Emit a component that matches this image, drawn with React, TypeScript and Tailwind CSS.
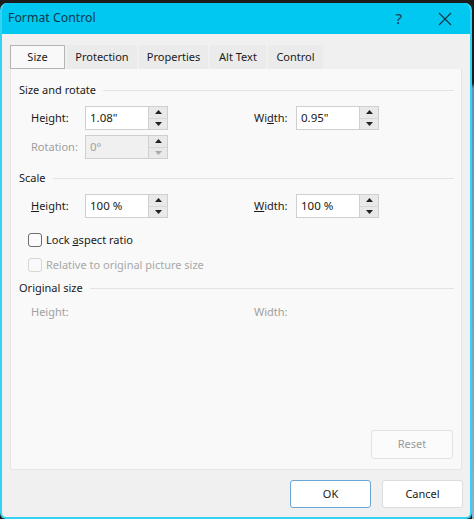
import React from "react";

const Spinner = ({ disabled = false }: { disabled?: boolean }) => (
  <div className="flex flex-col w-[19px] h-full border-l border-[#d0d0d0] bg-[#f3f3f3]">
    <div className="flex-1 flex items-center justify-center border-b border-[#d8d8d8] bg-[#e9e9e9]">
      <svg width="7" height="4" viewBox="0 0 7 4">
        <path d="M0 4 L3.5 0 L7 4 Z" fill="#222" />
      </svg>
    </div>
    <div className="flex-1 flex items-center justify-center bg-[#e9e9e9]">
      <svg width="7" height="4" viewBox="0 0 7 4">
        <path d="M0 0 L3.5 4 L7 0 Z" fill={disabled ? "#aaa" : "#222"} />
      </svg>
    </div>
  </div>
);

const NumberBox = ({ value, disabled = false }: { value: string; disabled?: boolean }) => (
  <div className="flex h-[24px] w-[83px] border border-[#cfcfcf]">
    <div
      className={`flex-1 flex items-center pl-[4px] text-[11.5px] ${
        disabled ? "bg-[#f0f0f0] text-[#a0a0a0]" : "bg-white text-[#1a1a1a]"
      }`}
    >
      {value}
    </div>
    <Spinner disabled={disabled} />
  </div>
);

const Heading = ({ title }: { title: string }) => (
  <div className="flex items-center h-[20px] pl-[8px] pr-[7px] gap-[7px]">
    <span className="text-[11px] text-[#1a1a1a] whitespace-nowrap">{title}</span>
    <div className="flex-1 h-px bg-[#e3e3e3]" />
  </div>
);

const App = () => {
  return (
    <div
      className="w-[474px] h-[519px] flex bg-[#1c1c1c] overflow-hidden"
      style={{ fontFamily: '"Noto Sans", "Open Sans", sans-serif' }}
    >
      <div className="w-[472px] h-[516px] mt-[3px] flex flex-col rounded-t-[7px] rounded-b-[6px] overflow-hidden border-x-2 border-b-2 border-[#33d2f2] bg-[#f0f0f0]">
        {/* title bar */}
        <div className="h-[31px] flex items-center bg-[#00c8f0] pl-[6px] pr-[18px]">
          <span className="text-[12.3px] text-[#12384a] flex-1">Format Control</span>
          <span className="text-[15px] text-[#12384a] mr-[36px]">?</span>
          <svg width="14" height="14" viewBox="0 0 14 14">
            <path d="M1 1 L13 13 M13 1 L1 13" stroke="#12384a" strokeWidth="1.2" />
          </svg>
        </div>

        {/* tabs */}
        <div className="flex pl-[8px] pt-[11px] gap-[2px] text-[11px] text-[#1a1a1a]">
          <div className="w-[55px] h-[24px] flex items-center justify-center border border-[#b4b4b4] bg-[#f9f9f9]">
            Size
          </div>
          <div className="w-[70px] h-[24px] flex items-center justify-center bg-[#ebebeb]">
            Protection
          </div>
          <div className="w-[69px] h-[24px] flex items-center justify-center bg-[#ebebeb]">
            Properties
          </div>
          <div className="w-[56px] h-[24px] flex items-center justify-center bg-[#ebebeb]">
            Alt Text
          </div>
          <div className="w-[55px] h-[24px] flex items-center justify-center bg-[#ebebeb]">
            Control
          </div>
        </div>

        {/* panel */}
        <div className="mx-[8px] h-[401px] flex flex-col bg-[#f9f9f9] border-x border-b border-[#e6e6e6]">
          <div className="mt-[11px]">
            <Heading title="Size and rotate" />
          </div>

          <div className="flex items-center mt-[6px] pl-[20px] text-[11px] text-[#1a1a1a]">
            <div className="w-[223px] flex items-center">
              <span className="w-[54px]">
                He<span className="underline">i</span>ght:
              </span>
              <NumberBox value={'1.08"'} />
            </div>
            <span className="w-[42px]">
              Wi<span className="underline">d</span>th:
            </span>
            <NumberBox value={'0.95"'} />
          </div>

          <div className="flex items-center mt-[5px] pl-[20px] text-[11px] text-[#a0a0a0]">
            <span className="w-[54px]">Rotation:</span>
            <NumberBox value="0°" disabled />
          </div>

          <div className="mt-[9px]">
            <Heading title="Scale" />
          </div>

          <div className="flex items-center mt-[6px] pl-[20px] text-[11px] text-[#1a1a1a]">
            <div className="w-[223px] flex items-center">
              <span className="w-[54px]">
                <span className="underline">H</span>eight:
              </span>
              <NumberBox value="100 %" />
            </div>
            <span className="w-[42px]">
              <span className="underline">W</span>idth:
            </span>
            <NumberBox value="100 %" />
          </div>

          <label className="flex items-center gap-[4px] h-[20px] mt-[12px] pl-[17px] text-[11px] text-[#1a1a1a]">
            <span className="w-[14px] h-[14px] rounded-[3px] border border-[#6e6e6e] bg-[#fbfbfb]" />
            <span>
              Lock <span className="underline">a</span>spect ratio
            </span>
          </label>

          <label className="flex items-center gap-[4px] h-[20px] mt-[5px] pl-[17px] text-[11px] text-[#a8a8a8]">
            <span className="w-[14px] h-[14px] rounded-[3px] border border-[#d6d6d6] bg-[#f9f9f9]" />
            <span>Relative to original picture size</span>
          </label>

          <div className="mt-[3px]">
            <Heading title="Original size" />
          </div>

          <div className="flex items-center h-[20px] mt-[4px] pl-[20px] text-[11px] text-[#a0a0a0]">
            <span className="w-[223px]">Height:</span>
            <span>Width:</span>
          </div>

          <div className="mt-auto mb-[10px] flex justify-end pr-[8px]">
            <button className="w-[82px] h-[29px] rounded-[3px] border border-[#e2e2e2] bg-[#fbfbfb] text-[11px] text-[#9a9a9a]">
              Reset
            </button>
          </div>
        </div>

        {/* footer */}
        <div className="flex justify-end gap-[11px] pt-[10px] pr-[7px] text-[11px] text-[#1a1a1a]">
          <button className="w-[81px] h-[28px] rounded-[3px] border border-[#6aa6d6] bg-white">
            OK
          </button>
          <button className="w-[81px] h-[28px] rounded-[3px] border border-[#dcdcdc] bg-white">
            Cancel
          </button>
        </div>
      </div>

      <div className="flex-1 bg-[linear-gradient(to_bottom,#1c1c1c_0%,#1c1c1c_16%,#5f8fb5_17%,#8fb0c8_100%)]" />
    </div>
  );
};

export default App;
